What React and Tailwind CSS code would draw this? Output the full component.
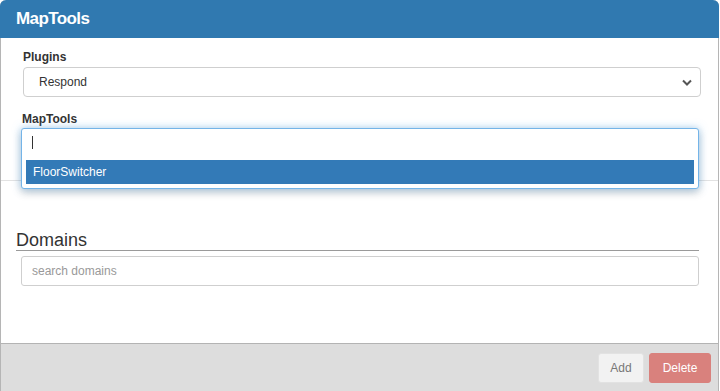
import React from "react";

export default function App() {
  return (
    <div
      className="w-[720px] h-[391px] overflow-hidden bg-white flex flex-col text-[#333]"
      style={{ fontFamily: '"Liberation Sans", Arial, sans-serif' }}
    >
      <div className="w-[719px] h-full flex flex-col border-x border-[#b5b5b5] rounded-t-[6px] relative">
        {/* header */}
        <div className="h-[38px] -mx-px bg-[#3079b0] rounded-t-[6px] flex items-center px-[16px] shrink-0">
          <span className="text-white font-bold text-[17px] tracking-[-0.6px] leading-none -mt-[1px]">MapTools</span>
        </div>

        {/* body */}
        <div className="flex-1 flex flex-col">
          <div className="relative border-b border-[#e2e2e2] h-[143px] pt-[11px]">
            <div className="pl-[22px] text-[12px] font-bold leading-[17px] h-[17px]">Plugins</div>
            <div className="ml-[22px] mt-[1px] w-[678px] h-[30px] border border-[#cfcfcf] rounded-[4px] flex items-center justify-between pl-[15px] pr-[8px] text-[12px]">
              <span className="text-[#333]">Respond</span>
              <svg width="10" height="7" viewBox="0 0 10 7">
                <path d="M1 1.5 L5 5.5 L9 1.5" fill="none" stroke="#555" strokeWidth="2" />
              </svg>
            </div>
            <div className="pl-[21px] mt-[14px] text-[12px] font-bold leading-[17px] h-[17px]">MapTools</div>
            {/* dropdown overlay */}
            <div className="absolute left-[20px] top-[90px] w-[678px] h-[61px] bg-white border border-[#74b4e8] rounded-[3px] shadow-[0_0_8px_rgba(102,175,233,0.55),0_4px_8px_rgba(0,0,0,0.18)] z-10 flex flex-col">
              <div className="h-[31px] flex items-start pl-[10px] pt-[7px]">
                <div className="w-px h-[13px] bg-[#333]"></div>
              </div>
              <div className="ml-[4px] mr-[4px] h-[24px] bg-[#337ab7] text-white text-[12px] flex items-center pl-[7px]">
                FloorSwitcher
              </div>
            </div>
          </div>

          <div className="ml-[15px] mt-[49px] w-[683px] h-[21px] border-b border-[#9a9a9a] text-[18px] leading-[20px]">
            Domains
          </div>
          <div className="ml-[20px] mt-[5px] w-[678px] h-[30px] border border-[#cfcfcf] rounded-[3px] flex items-center pl-[10px] text-[12px] text-[#999]">
            search domains
          </div>
        </div>

        {/* footer */}
        <div className="h-[48px] shrink-0 bg-[#dddddd] border-t border-[#b3b3b3] flex justify-end items-start pt-[9px] pr-[7px] gap-[5px]">
          <button className="w-[46px] h-[30px] bg-[#f2f2f2] border border-[#e2e2e2] rounded-[3px] text-[12px] text-[#777]">Add</button>
          <button className="w-[62px] h-[30px] bg-[#d9817d] border border-[#d9817d] rounded-[3px] text-[12px] text-white">Delete</button>
        </div>
      </div>
    </div>
  );
}
